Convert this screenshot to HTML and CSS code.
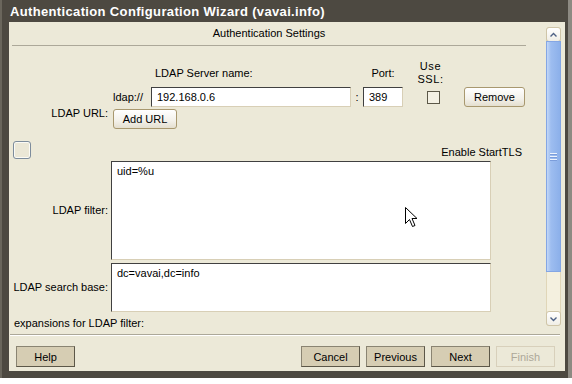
FILE: index.html
```html
<!DOCTYPE html>
<html lang="en">
<head>
    <meta charset="UTF-8" />
    <title>Authentication Configuration Wizard</title>
    <link rel="stylesheet" href="styles.css">
</head>
<body>
    <div class="window">
        <div class="titlebar">Authentication Configuration Wizard (vavai.info)</div>

        <div class="client">
            <div class="main">
                <div class="form">
                    <div class="heading">Authentication Settings</div>

                    <div class="url-block">
                        <div class="side-label url-label">LDAP URL:</div>
                        <div class="url-grid">
                            <div class="server-head">LDAP Server name:</div>
                            <div class="port-head">Port:</div>
                            <div class="ssl-head">Use<br>SSL:</div>

                            <div class="prefix">ldap://</div>
                            <input class="field server" value="192.168.0.6">
                            <div class="colon">:</div>
                            <input class="field port" value="389">
                            <div class="ssl-cell"><span class="check small"></span></div>
                            <button class="xp-btn remove">Remove</button>

                            <button class="xp-btn add">Add URL</button>
                        </div>
                    </div>

                    <div class="tls-row">
                        <span class="check big"></span>
                        <span>Enable StartTLS</span>
                    </div>

                    <div class="field-row">
                        <div class="side-label">LDAP filter:</div>
                        <textarea class="area filter">uid=%u</textarea>
                    </div>

                    <div class="field-row">
                        <div class="side-label">LDAP search base:</div>
                        <textarea class="area base">dc=vavai,dc=info</textarea>
                    </div>

                    <div class="expansions">expansions for LDAP filter:</div>
                </div>

                <div class="scrollbar">
                    <div class="sb-btn">
                        <svg width="13" height="12" viewBox="0 0 13 12"><polyline points="3.5,7.5 6.5,4.5 9.5,7.5" fill="none" stroke="#4d6185" stroke-width="1.4"/></svg>
                    </div>
                    <div class="sb-thumb">
                        <span></span><span></span><span></span>
                    </div>
                    <div class="sb-track"></div>
                    <div class="sb-btn">
                        <svg width="13" height="12" viewBox="0 0 13 12"><polyline points="3.5,4.5 6.5,7.5 9.5,4.5" fill="none" stroke="#4d6185" stroke-width="1.4"/></svg>
                    </div>
                </div>
            </div>

            <div class="sep"></div>

            <div class="footer">
                <button class="btn help">Help</button>
                <button class="btn">Cancel</button>
                <button class="btn">Previous</button>
                <button class="btn">Next</button>
                <button class="btn disabled">Finish</button>
            </div>
        </div>

        <svg class="cursor" width="14" height="21" viewBox="0 0 14 21">
            <path d="M0.5 0.5 L0.5 16.5 L4.5 12.5 L7.5 19.5 L10 18.5 L7 11.5 L12 11.5 Z" fill="#fff" stroke="#000" stroke-width="1"/>
        </svg>
    </div>
</body>
</html>
```

FILE: styles.css
```css
body {
    margin: 0;
    background: #fff;
    font-family: "Liberation Sans", Arial, sans-serif;
    font-size: 11px;
    color: #000;
}

.window {
    position: relative;
    width: 568px;
    height: 378px;
    background: #4d4941;
    box-shadow: inset 2px 0 0 #6a665c, 4px 0 0 #8d8a82;
    display: flex;
    flex-direction: column;
}

.titlebar {
    height: 22px;
    line-height: 23px;
    padding-left: 10px;
    color: #fff;
    font-weight: bold;
    font-size: 13px;
    letter-spacing: 0.35px;
}

.client {
    flex: 1;
    margin: 0 3px 7px 9px;
    background: #ece9d8;
    display: flex;
    flex-direction: column;
}

.main {
    height: 312px;
    display: flex;
    overflow: hidden;
}

.form {
    width: 514px;
    margin-left: 3px;
    overflow: hidden;
}

.heading {
    text-align: center;
    padding: 5px 0;
    line-height: 13px;
    border-bottom: 1px solid #aca899;
}

.url-block {
    display: flex;
    margin-top: 15px;
}

.side-label {
    width: 96px;
    flex-shrink: 0;
    padding-right: 3px;
    text-align: right;
    line-height: 13px;
}

.url-label {
    align-self: flex-end;
    padding-bottom: 9px;
}

.url-grid {
    display: grid;
    grid-template-columns: 40px 200px 12px 40px 55px 67px;
    grid-template-rows: 24px 20px 20px;
    row-gap: 2px;
    align-items: center;
}

.server-head {
    grid-column: 2;
    grid-row: 1;
    padding-left: 4px;
}

.port-head {
    grid-column: 4;
    grid-row: 1;
    text-align: center;
}

.ssl-head {
    grid-column: 5;
    grid-row: 1;
    text-align: center;
    line-height: 13px;
    letter-spacing: 0.6px;
}

.prefix {
    grid-column: 1;
    grid-row: 2;
    padding-left: 2px;
}

.colon {
    grid-column: 3;
    grid-row: 2;
    text-align: center;
}

.field {
    box-sizing: border-box;
    height: 20px;
    margin: 0;
    padding: 0 5px;
    font: inherit;
    background: #fff;
    border: 1px solid;
    border-color: #404040 #d8cfb6 #d8cfb6 #404040;
    outline: none;
}

.server {
    grid-column: 2;
    grid-row: 2;
    width: 200px;
}

.port {
    grid-column: 4;
    grid-row: 2;
    width: 40px;
}

.ssl-cell {
    grid-column: 5;
    grid-row: 2;
    display: flex;
    padding-left: 24px;
}

.check {
    display: block;
    box-sizing: border-box;
}

.check.small {
    width: 13px;
    height: 13px;
    border: 1px solid #5c5848;
    background: #f4f1e4;
}

.check.big {
    width: 18px;
    height: 18px;
    border: 1px solid #7d8c9c;
    border-radius: 3px;
    background: #ebe7d6;
    box-shadow: inset 0 0 0 1px #fbfaf5;
}

.xp-btn {
    box-sizing: border-box;
    height: 20px;
    margin: 0;
    padding: 0;
    font: inherit;
    border: 1px solid #a8986f;
    border-radius: 3px;
    background: linear-gradient(#ffffff, #f3f1ea 60%, #e4dfcf);
}

.remove {
    grid-column: 6;
    grid-row: 2;
    justify-self: end;
    width: 61px;
}

.add {
    grid-column: 1 / span 2;
    grid-row: 3;
    justify-self: start;
    margin-left: 2px;
    width: 64px;
}

.tls-row {
    display: flex;
    justify-content: space-between;
    align-items: center;
    height: 18px;
    margin-top: 12px;
    padding: 0 4px 0 1px;
}

.tls-row span:last-child {
    padding-top: 3px;
}

.field-row {
    display: flex;
    align-items: center;
    margin-top: 2px;
}

.field-row + .field-row {
    margin-top: 3px;
}

.area {
    box-sizing: border-box;
    width: 380px;
    margin: 0;
    padding: 3px 5px;
    font: inherit;
    line-height: 13px;
    resize: none;
    overflow: hidden;
    background: #fff;
    border: 1px solid;
    border-color: #404040 #d8cfb6 #d8cfb6 #404040;
    outline: none;
}

.filter {
    height: 99px;
}

.base {
    height: 49px;
}

.expansions {
    margin-top: 5px;
    padding-left: 2px;
    line-height: 13px;
}

.scrollbar {
    box-sizing: border-box;
    width: 15px;
    height: 299px;
    margin: 5px 0 0 20px;
    display: flex;
    flex-direction: column;
    border: 1px solid #e0d6b8;
    border-radius: 3px;
    background: #f4f0df;
}

.sb-btn {
    height: 13px;
    display: flex;
    justify-content: center;
    align-items: center;
    background: linear-gradient(#ffffff, #f0eee6);
    border: 1px solid #cfc5a8;
    border-radius: 3px;
    margin: -1px;
}

.sb-btn svg {
    display: block;
}

.sb-thumb {
    height: 231px;
    box-sizing: border-box;
    display: flex;
    flex-direction: column;
    justify-content: center;
    align-items: center;
    gap: 1px;
    margin: 0 -1px;
    background: linear-gradient(to right, #c3d7f7, #9dbdf0 30%, #8cb0ea);
    border: 1px solid #84a6e4;
}

.sb-thumb span {
    width: 7px;
    height: 1px;
    background: #eef4fd;
    border-bottom: 1px solid #7b9ddb;
}

.sb-track {
    flex: 1;
}

.sep {
    margin: 0 5px 0 1px;
    border-top: 1px solid #aca899;
    border-bottom: 1px solid #fff;
}

.footer {
    display: flex;
    gap: 6px;
    padding: 10px 10px 0 7px;
}

.btn {
    width: 59px;
    height: 21px;
    margin: 0;
    padding: 0;
    font: inherit;
    color: #000;
    background: #d6cdb3;
    border: 1px solid;
    border-color: #8a8472 #5c5748 #5c5748 #8a8472;
}

.help {
    margin-right: auto;
}

.btn.disabled {
    color: #aca899;
    background: #ece9d8;
    border-color: #d8d0bb;
}

.cursor {
    position: absolute;
    left: 405px;
    top: 207px;
}
```
